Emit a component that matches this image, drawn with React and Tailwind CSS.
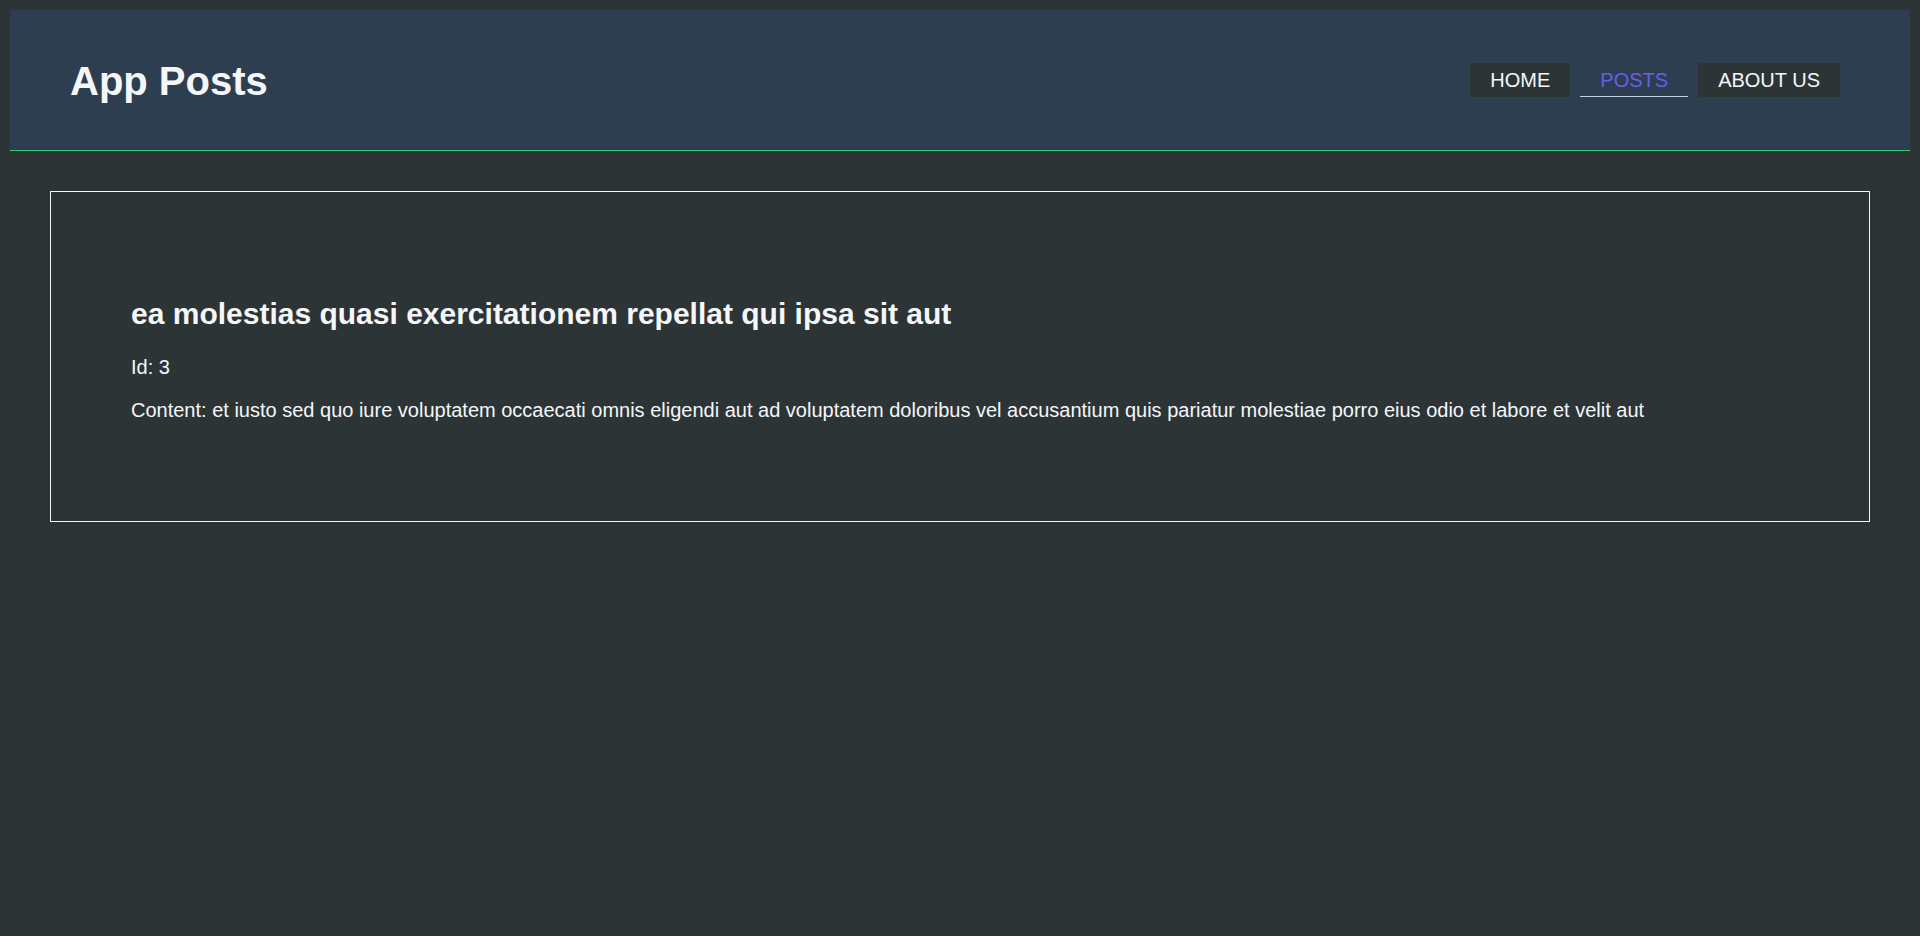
export default function App() {
  return (
    <div className="min-h-[936px] bg-[#2d3436] p-[10px] text-[#f5f6fa]" style={{ fontFamily: '"Liberation Sans", Arial, sans-serif' }}>
      <header className="flex h-[141px] items-center justify-between border-b border-[#2ecc71] bg-[#2c3e50] pl-[60px] pr-[70px]">
        <h1 className="pt-[1px] text-[40px] font-bold leading-[46px]">App Posts</h1>
        <nav className="flex items-center gap-[10px] text-[20px] leading-[23px]">
          <a className="border-b border-transparent bg-[#2d3436] px-[20px] pt-[6px] pb-[4px] text-[#f5f6fa]">HOME</a>
          <a className="border-b border-[#c8d0dc] px-[20px] pt-[6px] pb-[4px] text-[#6c5ce7]">POSTS</a>
          <a className="border-b border-transparent bg-[#2d3436] px-[20px] pt-[6px] pb-[4px] text-[#f5f6fa]">ABOUT US</a>
        </nav>
      </header>
      <main className="p-[40px]">
        <div className="border border-[#f5f6fa] pl-[80px] pr-[80px] pt-[105px] pb-[99px]">
          <h2 className="text-[30px] font-bold leading-[34px]">ea molestias quasi exercitationem repellat qui ipsa sit aut</h2>
          <p className="mt-[25px] text-[20px] leading-[23px]">Id: 3</p>
          <p className="mt-[20px] text-[20px] leading-[23px]">Content: et iusto sed quo iure voluptatem occaecati omnis eligendi aut ad voluptatem doloribus vel accusantium quis pariatur molestiae porro eius odio et labore et velit aut</p>
        </div>
      </main>
    </div>
  );
}
